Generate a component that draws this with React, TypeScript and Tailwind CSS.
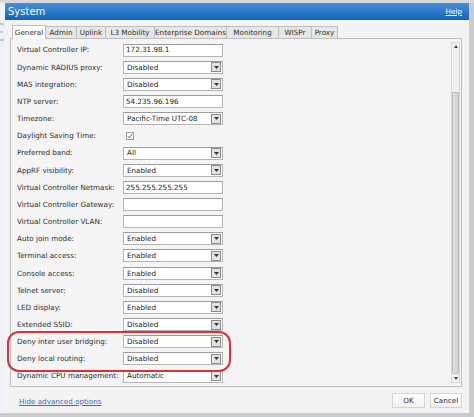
import React from "react";

type Row = { label: string; kind: "text" | "select" | "check"; value?: string };

const rows: Row[] = [
  { label: "Virtual Controller IP:", kind: "text", value: "172.31.98.1" },
  { label: "Dynamic RADIUS proxy:", kind: "select", value: "Disabled" },
  { label: "MAS integration:", kind: "select", value: "Disabled" },
  { label: "NTP server:", kind: "text", value: "54.235.96.196" },
  { label: "Timezone:", kind: "select", value: "Pacific-Time UTC-08" },
  { label: "Daylight Saving Time:", kind: "check" },
  { label: "Preferred band:", kind: "select", value: "All" },
  { label: "AppRF visibility:", kind: "select", value: "Enabled" },
  { label: "Virtual Controller Netmask:", kind: "text", value: "255.255.255.255" },
  { label: "Virtual Controller Gateway:", kind: "text", value: "" },
  { label: "Virtual Controller VLAN:", kind: "text", value: "" },
  { label: "Auto join mode:", kind: "select", value: "Enabled" },
  { label: "Terminal access:", kind: "select", value: "Enabled" },
  { label: "Console access:", kind: "select", value: "Enabled" },
  { label: "Telnet server:", kind: "select", value: "Disabled" },
  { label: "LED display:", kind: "select", value: "Enabled" },
  { label: "Extended SSID:", kind: "select", value: "Disabled" },
  { label: "Deny inter user bridging:", kind: "select", value: "Disabled" },
  { label: "Deny local routing:", kind: "select", value: "Disabled" },
  { label: "Dynamic CPU management:", kind: "select", value: "Automatic" },
];

const tabs: { name: string; w: string }[] = [
  { name: "General", w: "w-[34px]" },
  { name: "Admin", w: "w-[31px]" },
  { name: "Uplink", w: "w-[29px]" },
  { name: "L3 Mobility", w: "w-[49px]" },
  { name: "Enterprise Domains", w: "w-[72px]" },
  { name: "Monitoring", w: "w-[52px]" },
  { name: "WISPr", w: "w-[33px]" },
  { name: "Proxy", w: "w-[26px]" },
];

function Field({ row }: { row: Row }) {
  if (row.kind === "check") {
    return (
      <div className="ml-[3px] flex h-[8px] w-[8px] items-center justify-center border border-[#9a9a9a] bg-white">
        <svg width="6" height="6" viewBox="0 0 6 6">
          <path d="M0.8 3.2 L2.4 4.8 L5.3 0.9" fill="none" stroke="#5a5a5a" strokeWidth="1" />
        </svg>
      </div>
    );
  }
  if (row.kind === "text") {
    return (
      <div className="flex h-[13px] w-[100px] items-center border border-[#b4b4b4] border-t-[#9c9c9c] bg-white pl-[2px] text-[#222]">
        {row.value}
      </div>
    );
  }
  return (
    <div className="flex h-[13px] w-[100px] items-center justify-between border border-[#b4b4b4] border-t-[#9c9c9c] bg-white pl-[3px] pr-[1px] text-[#222]">
      <span>{row.value}</span>
      <div className="flex h-[10px] w-[10px] items-center justify-center border border-[#8c8c8c] bg-[#e2e2e2]">
        <svg width="5" height="3" viewBox="0 0 5 3">
          <path d="M0 0 L5 0 L2.5 3 Z" fill="#333" />
        </svg>
      </div>
    </div>
  );
}

export default function App() {
  return (
    <div className="relative flex h-[417px] w-[474px] flex-col overflow-hidden bg-[#cfd2d5] font-['DejaVu_Sans',Verdana,sans-serif] text-[7.2px] leading-none text-[#2e2e2e]">
      <div className="h-[3px] w-full bg-[#d6d8da]" />
      <div className="flex flex-1">
        <div className="flex w-[5px] flex-col gap-[6px] bg-[#eef2f6] pt-[20px]">
          <div className="h-[2px] w-[4px] bg-[#b8c4d0]" />
          <div className="h-[2px] w-[3px] bg-[#c4ccd6]" />
          <div className="h-[2px] w-[4px] bg-[#b8c4d0]" />
        </div>
        <div className="flex w-[464px] flex-col bg-[#f3f3f3]">
          <div className="flex h-[17px] items-center justify-between bg-[linear-gradient(#4690dc,#1462b8)] pl-[3px] pr-[7px] text-white">
            <span className="text-[10px]">System</span>
            <span className="text-[7.2px] underline">Help</span>
          </div>
          <div className="flex flex-col pl-[5px] pr-[7px] pt-[5px]">
            <div className="flex h-[13px] items-end pl-[2px]">
              {tabs.map((t, i) =>
                i === 0 ? (
                  <div
                    key={t.name}
                    className={`${t.w} relative z-10 -mb-px flex h-[14px] items-center justify-center border border-b-0 border-[#bdbdbd] bg-white`}
                  >
                    {t.name}
                  </div>
                ) : (
                  <div
                    key={t.name}
                    className={`${t.w} flex h-[12px] items-center justify-center border border-l-0 border-b-0 border-[#bdbdbd] bg-[#e6e6e6] whitespace-nowrap`}
                  >
                    {t.name}
                  </div>
                )
              )}
            </div>
            <div className="flex h-[349px] border border-[#bdbdbd] bg-[#f4f4f4]">
              <div className="flex flex-1 flex-col pl-[6px] pt-[2.5px]">
                {rows.map((r) => (
                  <div key={r.label} className="flex h-[17.16px] items-center">
                    <div className="w-[106px] whitespace-nowrap">{r.label}</div>
                    <Field row={r} />
                  </div>
                ))}
              </div>
              <div className="my-[3px] mr-[1px] flex w-[9px] flex-col border border-[#d6d6d6] bg-[#f0f0f0]">
                <div className="flex h-[7px] items-center justify-center">
                  <svg width="4" height="3" viewBox="0 0 4 3">
                    <path d="M0 3 L4 3 L2 0 Z" fill="#444" />
                  </svg>
                </div>
                <div className="h-[42px]" />
                <div className="flex-1 rounded-[1px] border border-[#bcbcbc] bg-[linear-gradient(90deg,#e2e2e2,#cfcfcf)]" />
                <div className="flex h-[8px] items-center justify-center">
                  <svg width="4" height="3" viewBox="0 0 4 3">
                    <path d="M0 0 L4 0 L2 3 Z" fill="#444" />
                  </svg>
                </div>
              </div>
            </div>
            <div className="flex h-[26px] items-center justify-between pl-[9px]">
              <span className="mt-[3px] text-[#3a6cb4] underline">Hide advanced options</span>
              <div className="flex gap-[5px] pt-[1px]">
                <div className="flex h-[15px] w-[33px] items-center justify-center border border-[#d4d4d4] bg-[linear-gradient(#ffffff,#f0f0f0)]">
                  OK
                </div>
                <div className="flex h-[15px] w-[32px] items-center justify-center border border-[#d4d4d4] bg-[linear-gradient(#ffffff,#f0f0f0)]">
                  Cancel
                </div>
              </div>
            </div>
          </div>
        </div>
        <div className="w-[5px] bg-[#c9cbcd]" />
      </div>
      <div className="h-[4px] w-full bg-[#c9cbcd]" />
      <div className="pointer-events-none absolute left-[7px] top-[331px] h-[41px] w-[224px] rounded-[12px] border-[2px] border-[#d6323a]" />
    </div>
  );
}
